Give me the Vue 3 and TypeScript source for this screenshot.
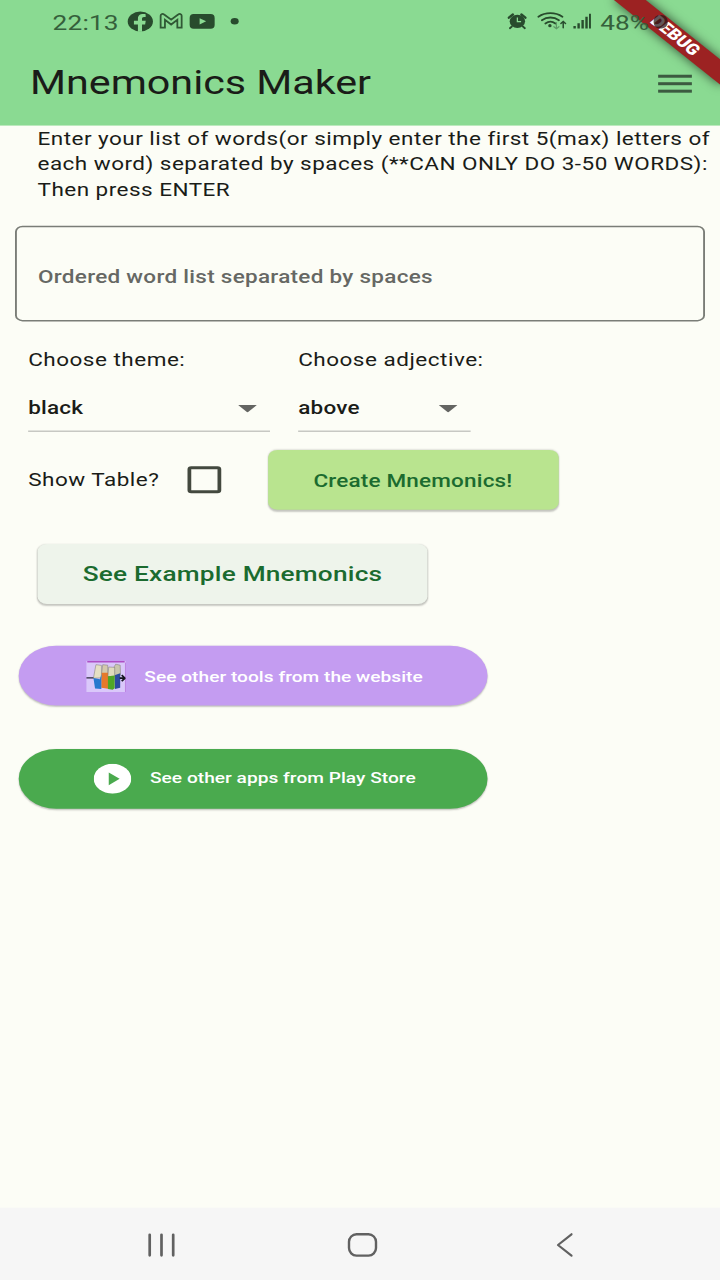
<script setup lang="ts">
import { ref } from 'vue'

interface Choice {
  label: string
  value: string
  kind: string
}

const choices: Choice[] = [
  { label: 'Choose theme:', value: 'black', kind: 'theme' },
  { label: 'Choose adjective:', value: 'above', kind: 'adjective' },
]
const intro: string[] = [
  'Enter your list of words(or simply enter the first 5(max) letters of',
  'each word) separated by spaces (**CAN ONLY DO 3-50 WORDS):',
  'Then press ENTER',
]
const showTable = ref(false)
</script>

<template>
  <div class="viewport">
    <div class="screen">
      <header class="top">
        <div class="status">
          <span class="clock">22:13</span>
          <svg class="status-left" viewBox="126 8 116 28" preserveAspectRatio="none">
            <ellipse cx="140.7" cy="22" rx="12.6" ry="10" fill="#284b2d" />
            <path d="M138.3 32.3V25h-4v-3.6h4v-2.2c0-3.2 2.2-4.6 5.2-4.6 1.2 0 2.5.2 2.5.2v2.7h-1.7c-1.4 0-1.9.8-1.9 1.6v2.300h3.700l-.6 3.600h-3.100v7.300z" fill="#8ada92" />
            <path d="M161 28.200V16.300c0-1.900 2.100-2.300 3.500-1.200l7 5.100 7-5.100c1.400-1.100 3.500-.7 3.500 1.200v11.900h-4.300v-7.800l-6.200 4.700-6.200-4.700v7.800z" fill="none" stroke="#305835" stroke-width="1.800" />
            <rect x="190" y="14.500" width="25" height="14.800" rx="4" fill="#284b2d" />
            <path d="M200 18.700v6.400l6.500-3.200z" fill="#8ada92" />
            <ellipse cx="235" cy="21.800" rx="4" ry="3.300" fill="#284b2d" />
          </svg>
          <svg class="status-right" viewBox="504 8 92 28" preserveAspectRatio="none">
            <g fill="none" stroke="#284b2d">
              <path d="M508.500 18.200l4-3.200M525 18.200l-4-3.200" stroke-width="2.400" stroke-linecap="round" />
              <path d="M511.500 27l-2 1.800M522.500 27l2 1.800" stroke-width="1.800" stroke-linecap="round" />
            </g>
            <ellipse cx="517" cy="21.900" rx="7.700" ry="6.700" fill="#284b2d" />
            <path d="M517 18v4.200h3.700" fill="none" stroke="#8ada92" stroke-width="1.300" />
            <g fill="none" stroke="#284b2d" stroke-width="1.900" stroke-linecap="round">
              <path d="M538 17.200c7-4.700 17-4.700 24 0M541.500 20.700c5-3.500 12-3.500 17 0M545 24c3-2.200 7-2.200 10 0" />
              <path d="M562.800 28.200v-5.700M560.500 24l2.300-2 2.300 2" stroke-width="1.500" />
              <path d="M556 23.200v5.700M553.500 27.200l2.500 2 2.500-2" stroke="#5e9966" stroke-width="1.200" />
            </g>
            <circle cx="549.500" cy="26.200" r="1.700" fill="#284b2d" />
            <path d="M573 26.500h2.400V29H573zM577 23.800h2.400V29H577zM581 20.500h2.400V29H581zM584.900 17.200h2.400V29h-2.400zM588.600 14.200h1.900V29h-1.900z" fill="#284b2d" />
          </svg>
          <span class="percent">48%</span>
          <svg class="battery" viewBox="650 12 20 20" preserveAspectRatio="none">
            <rect x="653" y="15" width="14" height="13.500" rx="6" fill="#251719" opacity=".72" />
          </svg>
        </div>
        <div class="appbar">
          <h1 class="title">Mnemonics Maker</h1>
          <span class="menu"><i /><i /><i /></span>
        </div>
      </header>

      <main class="content">
        <p class="intro">
          <span v-for="line in intro" :key="line" class="intro-line">{{ line }}</span>
        </p>
        <div class="field"><span class="hint">Ordered word list separated by spaces</span></div>

        <div class="choices">
          <div v-for="c in choices" :key="c.kind" class="choice" :class="c.kind">
            <span class="label">{{ c.label }}</span>
            <div class="select">
              <span class="value">{{ c.value }}</span>
              <svg class="arrow" viewBox="0 0 10 5"><path d="M0 0h10L5 5z" fill="#646562" /></svg>
            </div>
          </div>
        </div>

        <div class="create-row">
          <span class="label show">Show Table?</span>
          <span class="checkbox" role="checkbox" :aria-checked="showTable" @click="showTable = !showTable" />
          <button class="btn create"><span>Create Mnemonics!</span></button>
        </div>

        <button class="btn example"><span>See Example Mnemonics</span></button>

        <button class="btn pill web">
          <svg class="books" viewBox="86 660 40 32" preserveAspectRatio="none">
            <rect x="86" y="660" width="40" height="32" fill="#dac8fa" />
            <path d="M87 660h37.500v1.900H87z" fill="#ae4fc5" />
            <path d="M125.300 662v30" stroke="#b063d2" stroke-width="1" />
            <path d="M86 677.300h8" stroke="#29263a" stroke-width="1.300" />
            <path d="M114 666l1.500-2.500 4.500 1 .3 10-6 1z" fill="#c9c6ae" stroke="#77776f" stroke-width=".5" />
            <path d="M114.300 674.500l5.700-2v14.500l-5.200 1.300z" fill="#2b4b9e" />
            <path d="M101.300 673l1.200-9 5 .5v9z" fill="#d3c9ac" stroke="#77776f" stroke-width=".5" />
            <path d="M101 672h7v16l-7-1z" fill="#e6792a" />
            <path d="M93.200 677.500l2.500-13.500 5.500.7v12.500z" fill="#e6e0c4" stroke="#77776f" stroke-width=".5" />
            <path d="M93.200 677.300l6.500 1.200 1.400-5v14.800l-6.300-.4z" fill="#2879ce" />
            <path d="M107.700 676l.8-9.700 6 .4v9z" fill="#dfdbbd" stroke="#77776f" stroke-width=".5" />
            <path d="M107.700 675.500l6.800-.8v13l-2 1.300-4.800-.6z" fill="#50a625" />
            <path d="M119.500 677.500h5M121.500 674.500l3.300 3-3.300 3" fill="none" stroke="#15151e" stroke-width="1.700" />
          </svg>
          <span>See other tools from the website</span>
        </button>

        <button class="btn pill play">
          <svg class="play-icon" viewBox="0 0 20 20">
            <circle cx="10" cy="10" r="10" fill="#fff" />
            <path d="M8 5.800v8.500l5.800-4.250z" fill="#4aaa4e" />
          </svg>
          <span>See other apps from Play Store</span>
        </button>
      </main>

      <nav class="navbar">
        <svg viewBox="0 1208 720 72" preserveAspectRatio="none" fill="none" stroke="#616161" stroke-linecap="round" stroke-linejoin="round">
          <path d="M149.700 1235v20.500M161.500 1235v20.500M173.200 1235v20.500" stroke-width="2.700" />
          <rect x="349" y="1234.500" width="27" height="21.300" rx="7.500" stroke-width="2.400" />
          <path d="M571.500 1234.500l-13.500 10.700 13.500 10.700" stroke-width="2.200" />
        </svg>
      </nav>

      <div class="ribbon">DEBUG</div>
    </div>
  </div>
</template>

<style>
body {
  background: #fcfdf6;
}
</style>

<style scoped>
.viewport {
  width: 720px;
  height: 1280px;
  overflow: hidden;
}
/* Logical phone canvas, mapped to the window with unequal axis scales. */
.screen {
  position: relative;
  display: flex;
  flex-direction: column;
  width: 384px;
  height: 857px;
  overflow: hidden;
  transform: scale(1.875, 1.49477);
  transform-origin: 0 0;
  background: #fcfdf6;
  color: #1a1c18;
  font-family: Roboto, "Liberation Sans", sans-serif;
  font-size: 12px;
}
.top {
  height: 84px;
  flex: none;
  background: #8ada92;
}
.status {
  position: relative;
  z-index: 2;
  display: flex;
  align-items: center;
  height: 29px;
  padding-left: 28px;
  box-sizing: border-box;
  color: #35603b;
  font-size: 14px;
}
.clock {
  width: 39.2px;
  letter-spacing: 0.1px;
}
.status-left {
  width: 61.9px;
  height: 18.73px;
}
.status-right {
  width: 49.1px;
  height: 18.73px;
  margin-left: 139.7px;
}
.percent {
  width: 28.7px;
  padding-left: 2.3px;
  box-sizing: border-box;
  white-space: nowrap;
}
.battery {
  width: 10.7px;
  height: 13.4px;
}
.appbar {
  display: flex;
  align-items: center;
  justify-content: space-between;
  height: 54px;
  padding: 0 15px 0 16px;
}
.title {
  margin: 0;
  font-size: 22px;
  font-weight: 400;
  line-height: 28px;
}
.menu {
  display: flex;
  flex-direction: column;
  gap: 3px;
  width: 18px;
}
.menu i {
  height: 2px;
  background: #3c5a40;
}
.content {
  flex: 1;
  display: flex;
  flex-direction: column;
  align-items: flex-start;
}
.intro {
  margin: 0 0 0 20px;
  padding-top: 1.4px;
  line-height: 17px;
  letter-spacing: 0.25px;
}
.intro-line {
  display: block;
  white-space: nowrap;
}
.field {
  display: flex;
  align-items: center;
  width: 368px;
  height: 64px;
  margin: 14.8px 0 0 8px;
  padding: 3.8px 0 0 11.3px;
  box-sizing: border-box;
  border: 1px solid #7a7d77;
  border-radius: 4px;
}
.hint {
  color: #666864;
  font-weight: 500;
  letter-spacing: 0.15px;
}
.choices {
  display: flex;
  gap: 15px;
  margin: 18px 0 0 15px;
}
.choice {
  display: flex;
  flex-direction: column;
}
.theme {
  width: 129px;
}
.adjective {
  width: 92px;
}
.label {
  line-height: 17px;
  letter-spacing: 0.27px;
  white-space: nowrap;
}
.select {
  display: flex;
  align-items: center;
  justify-content: space-between;
  height: 39px;
  padding: 8.6px 7px 0 0;
  box-sizing: border-box;
  border-bottom: 1px solid #c7c8c3;
}
.value {
  font-weight: 500;
  letter-spacing: 0.13px;
}
.arrow {
  width: 10px;
  height: 5px;
}
.create-row {
  display: flex;
  align-items: center;
  height: 40px;
  margin: 12px 0 0 15px;
}
.show {
  width: 85px;
  padding-top: 0.7px;
}
.checkbox {
  width: 18px;
  height: 18px;
  margin-right: 25px;
  box-sizing: border-box;
  border: 2px solid #43493f;
  border-radius: 2px;
}
.btn {
  display: flex;
  align-items: center;
  justify-content: center;
  height: 40px;
  padding: 0;
  border: 0;
  font-family: inherit;
  font-weight: 500;
  white-space: nowrap;
  box-shadow: 0 1px 1px rgba(0, 0, 0, 0.2), 0 0 1px rgba(0, 0, 0, 0.1);
}
.create {
  width: 155px;
  padding: 1px 0.5px 0 0;
  border-radius: 5px;
  background: #b9e48f;
  color: #1b6b2f;
  font-size: 12px;
  letter-spacing: 0.1px;
}
.example {
  width: 208px;
  margin: 23px 0 0 20px;
  border-radius: 5px;
  background: #eef4eb;
  color: #1b6b2f;
  font-size: 14px;
  letter-spacing: 0.1px;
}
.pill {
  justify-content: flex-start;
  width: 250px;
  margin-left: 10px;
  border-radius: 20px;
  color: #fff;
  font-size: 10.2px;
  letter-spacing: 0.015px;
}
.web {
  margin-top: 28.3px;
  padding-left: 35.9px;
  background: #c49cf1;
}
.web span {
  padding-top: 1px;
}
.books {
  width: 21.3px;
  height: 21.4px;
  margin: 0.5px 9.8px 0 0;
}
.play {
  margin-top: 28.3px;
  padding-left: 40px;
  background: #4aaa4e;
}
.play-icon {
  width: 20px;
  height: 20px;
  margin-right: 10px;
}
.navbar {
  flex: none;
  height: 48.9px;
  background: #f6f6f6;
}
.navbar svg {
  display: block;
  width: 100%;
  height: 48.2px;
}
.ribbon {
  position: absolute;
  left: 344px;
  top: 28px;
  width: 80px;
  height: 12px;
  transform: rotate(45deg);
  transform-origin: 40px -28px;
  background: #9c2222;
  box-shadow: 0 0 6px rgba(0, 0, 0, 0.65);
  color: #fff;
  font-size: 10.2px;
  font-weight: 900;
  line-height: 12px;
  text-align: center;
}
</style>
